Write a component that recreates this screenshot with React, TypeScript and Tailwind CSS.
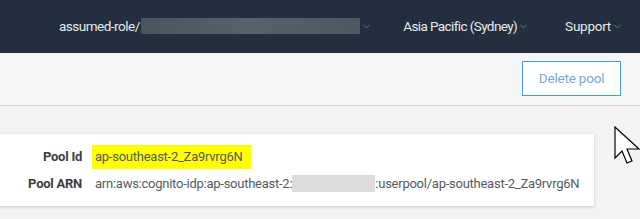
import { ChevronDown } from "lucide-react";

function NavItem({ children }: { children: React.ReactNode }) {
  return (
    <div className="flex items-center gap-[1px] whitespace-nowrap text-[13.5px] tracking-[-0.25px] text-[#e6eaea]">
      {children}
      <ChevronDown size={11} strokeWidth={1.5} className="shrink-0 text-[#8d969e]" />
    </div>
  );
}

function Cursor() {
  return (
    <svg
      width="27"
      height="40"
      viewBox="0 0 27 40"
      className="absolute left-[614px] top-[126px]"
    >
      <path
        d="M1 1 L1 32 L8 25 L13 37 L18 35 L13 23 L25 23 Z"
        fill="#fff"
        stroke="#000"
        strokeWidth="1.2"
        strokeLinejoin="miter"
      />
    </svg>
  );
}

export default function App() {
  return (
    <div className="relative w-[640px] h-[219px] overflow-hidden bg-[#f2f3f3] font-['Roboto',sans-serif]">
      <div className="h-[53px] bg-[#232f3e] flex items-center pl-[59px] pr-[17px] pb-[1px]">
        <NavItem>
          <span className="tracking-[-0.5px]">assumed-role/</span>
          <span className="shrink-0 w-[219px] h-[16px] bg-gradient-to-r from-[#4b5560] via-[#56616b] to-[#4d5862]" />
        </NavItem>
        <div className="ml-auto flex items-center gap-[36px]">
          <NavItem>
            <span className="tracking-[-0.6px]">Asia Pacific (Sydney)</span>
          </NavItem>
          <NavItem>Support</NavItem>
        </div>
      </div>

      <div className="h-[53px] bg-[#f4f5f5] border-b border-[#d5d6d6] flex justify-end pt-[8px] pr-[19px]">
        <button className="h-[35px] w-[99px] bg-white border border-[#4a9ad6] text-[13.5px] tracking-[-0.2px] text-[#75aade] font-['Roboto',sans-serif]">
          Delete pool
        </button>
      </div>

      <div className="pt-[28px] pr-[46px]">
        <div className="h-[72px] bg-white shadow-[0_1px_3px_rgba(0,0,0,0.18)] flex flex-col justify-center gap-[5px] pb-[2px] text-[13px] tracking-[-0.25px] whitespace-nowrap">
          <div className="flex items-center">
            <div className="w-[82px] shrink-0 text-right font-bold text-[#3d3d3d]">Pool Id</div>
            <div className="ml-[10px] bg-[#ffff00] pl-[3px] pr-[8px] py-[2px] text-[#545b64]">
              ap-southeast-2_Za9rvrg6N
            </div>
          </div>
          <div className="flex items-center">
            <div className="w-[82px] shrink-0 text-right font-bold text-[#3d3d3d]">Pool ARN</div>
            <div className="ml-[13px] flex items-center text-[#545b64]">
              <span>arn:aws:cognito-idp:ap-southeast-2:</span>
              <span className="shrink-0 w-[83px] h-[17px] bg-[#dcdcdc]" />
              <span>:userpool/ap-southeast-2_Za9rvrg6N</span>
            </div>
          </div>
        </div>
      </div>

      <Cursor />
    </div>
  );
}
